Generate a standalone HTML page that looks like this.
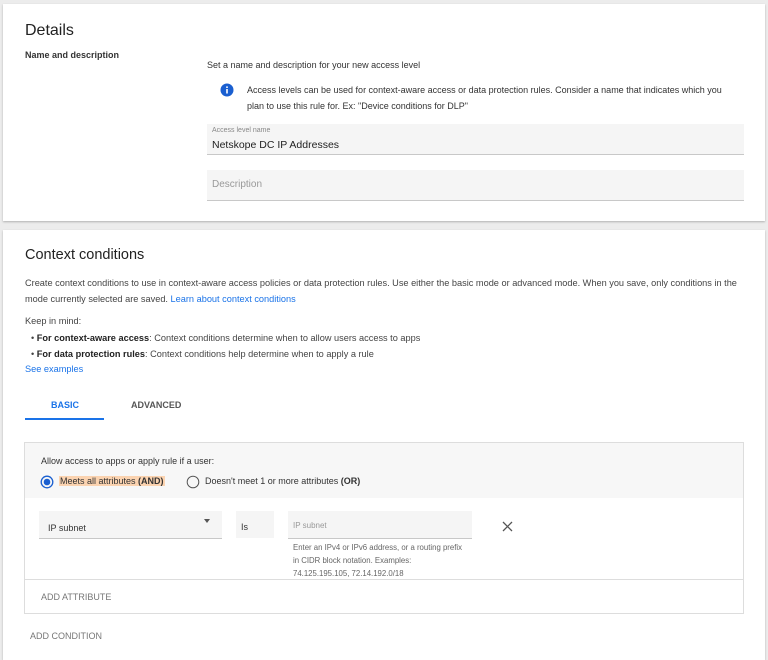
<!DOCTYPE html>
<html><head><meta charset="utf-8"><style>
*{margin:0;padding:0;box-sizing:border-box}
body{width:768px;height:647px;background:#ececec;font-family:"Liberation Sans",Arial,sans-serif;color:#202124;position:relative;overflow:hidden}
.a{position:absolute;white-space:nowrap}
.card{position:absolute;background:#fff;box-shadow:0 1px 2px rgba(0,0,0,.25)}
.f{position:absolute;background:#f5f5f5;border-bottom:1px solid #c8c8c8}
.blue{color:#1a73e8}
</style></head><body>
<div class="card" style="left:3px;top:4px;width:762px;height:217px"></div>
<div class="a" style="left:25px;top:22px;font-size:16px;color:#222">Details</div>
<div class="a" style="left:25px;top:50px;font-size:9px;font-weight:bold;color:#333">Name and description</div>
<div class="a" style="left:207px;top:60px;font-size:9px;color:#333">Set a name and description for your new access level</div>
<svg class="a" style="left:220px;top:83px" width="14" height="14" viewBox="0 0 14 14"><circle cx="7" cy="7" r="6.5" fill="#1a5fd0"/><rect x="6.2" y="6" width="1.6" height="4.5" fill="#fff"/><rect x="6.2" y="3.4" width="1.6" height="1.6" fill="#fff"/></svg>
<div class="a" style="left:247px;top:82px;font-size:9px;color:#333;line-height:16px">Access levels can be used for context-aware access or data protection rules. Consider a name that indicates which you<br>plan to use this rule for. Ex: "Device conditions for DLP"</div>
<div class="f" style="left:207px;top:124px;width:537px;height:31px"></div>
<div class="a" style="left:212px;top:127px;font-size:7px;color:#888">Access level name</div>
<div class="a" style="left:212px;top:139px;font-size:10.5px;color:#222">Netskope DC IP Addresses</div>
<div class="f" style="left:207px;top:170px;width:537px;height:31px"></div>
<div class="a" style="left:212px;top:179px;font-size:10px;color:#999">Description</div>

<div class="card" style="left:3px;top:230px;width:762px;height:430px"></div>
<div class="a" style="left:25px;top:247px;font-size:14.5px;color:#222">Context conditions</div>
<div class="a" style="left:25px;top:275px;font-size:9.2px;color:#444;line-height:16px">Create context conditions to use in context-aware access policies or data protection rules. Use either the basic mode or advanced mode. When you save, only conditions in the<br>mode currently selected are saved. <span class="blue">Learn about context conditions</span></div>
<div class="a" style="left:25px;top:316px;font-size:9.2px;color:#444">Keep in mind:</div>
<div class="a" style="left:31px;top:330px;font-size:9.2px;color:#444;line-height:16px">• <b style="color:#222">For context-aware access</b>: Context conditions determine when to allow users access to apps<br>• <b style="color:#222">For data protection rules</b>: Context conditions help determine when to apply a rule</div>
<div class="a blue" style="left:25px;top:364px;font-size:9.2px">See examples</div>
<div class="a blue" style="left:51px;top:400px;font-size:9px;font-weight:bold">BASIC</div>
<div class="a" style="left:131px;top:400px;font-size:9px;font-weight:bold;color:#555">ADVANCED</div>
<div class="a" style="left:25px;top:418px;width:79px;height:2px;background:#1a73e8"></div>

<div class="a" style="left:24px;top:442px;width:720px;height:172px;border:1px solid #ddd;background:#fff"></div>
<div class="a" style="left:25px;top:443px;width:718px;height:55px;background:#f7f7f7"></div>
<div class="a" style="left:41px;top:456px;font-size:9px;color:#333">Allow access to apps or apply rule if a user:</div>
<svg class="a" style="left:40px;top:475px" width="14" height="14"><circle cx="7" cy="7" r="5.8" fill="none" stroke="#1a5fd0" stroke-width="1.3"/><circle cx="7" cy="7" r="3.3" fill="#1a5fd0"/></svg>
<div class="a" style="left:59px;top:476px;font-size:9px;color:#333;background:#fbd3b0;padding:0 1px">Meets all attributes <b>(AND)</b></div>
<svg class="a" style="left:186px;top:475px" width="14" height="14"><circle cx="7" cy="7" r="5.8" fill="none" stroke="#555" stroke-width="1"/></svg>
<div class="a" style="left:205px;top:476px;font-size:9px;color:#333">Doesn't meet 1 or more attributes <b>(OR)</b></div>
<div class="f" style="left:39px;top:511px;width:183px;height:28px"></div>
<div class="a" style="left:48px;top:523px;font-size:9px;color:#333">IP subnet</div>
<div class="a" style="left:204px;top:519px;width:0;height:0;border-left:3.5px solid transparent;border-right:3.5px solid transparent;border-top:4px solid #555"></div>
<div class="a" style="left:236px;top:511px;width:38px;height:27px;background:#f5f5f5"></div>
<div class="a" style="left:241px;top:522px;font-size:9px;color:#333">Is</div>
<div class="f" style="left:288px;top:511px;width:184px;height:28px"></div>
<div class="a" style="left:293px;top:521px;font-size:8px;color:#999">IP subnet</div>
<svg class="a" style="left:502px;top:521px" width="11" height="11"><path d="M1 1L10 10M10 1L1 10" stroke="#555" stroke-width="1.3"/></svg>
<div class="a" style="left:293px;top:541px;font-size:7.8px;color:#666;line-height:13px">Enter an IPv4 or IPv6 address, or a routing prefix<br>in CIDR block notation. Examples:<br>74.125.195.105, 72.14.192.0/18</div>
<div class="a" style="left:25px;top:579px;width:718px;height:1px;background:#ddd"></div>
<div class="a" style="left:41px;top:592px;font-size:9px;color:#777">ADD ATTRIBUTE</div>
<div class="a" style="left:30px;top:631px;font-size:9px;color:#777">ADD CONDITION</div>
</body></html>
